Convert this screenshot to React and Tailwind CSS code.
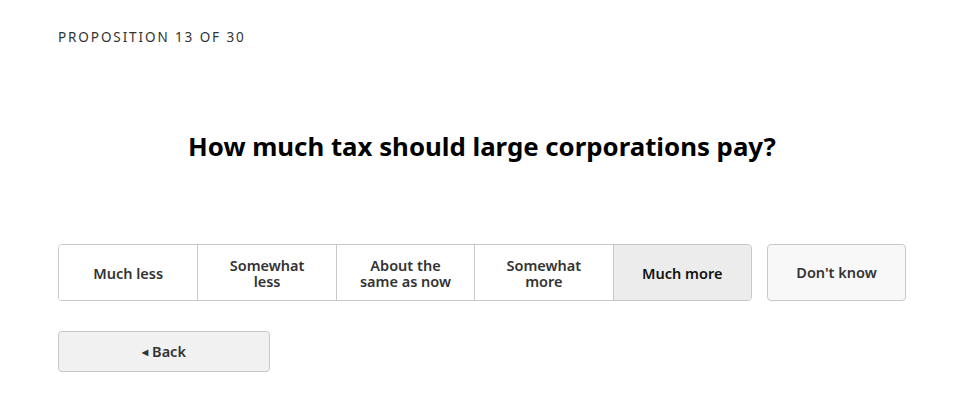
import React from "react";

const options = [
  { label: "Much less" },
  { label: "Somewhat less", lines: ["Somewhat", "less"] },
  { label: "About the same as now", lines: ["About the", "same as now"] },
  { label: "Somewhat more", lines: ["Somewhat", "more"] },
  { label: "Much more", selected: true },
];

export default function App() {
  return (
    <div className="min-h-[401px] w-[964px] bg-white font-['Noto_Sans',sans-serif] text-[#333]">
      <div className="px-[58px] pt-[28px]">
        {/* Header */}
        <div className="text-[13.5px] leading-[18px] tracking-[1.9px] text-[#333]">PROPOSITION 13 OF 30</div>

        {/* Question */}
        <h1 className="mt-[82px] text-center text-[25.8px] font-bold leading-[36px] text-black">
          How much tax should large corporations pay?
        </h1>

        {/* Answers */}
        <div className="mt-[80px] flex gap-[15px]">
          <div className="grid h-[57px] w-[694px] grid-cols-5 overflow-hidden rounded-[4px] border border-[#c8c8c8]">
            {options.map((opt, idx) => (
              <button
                key={`opt-${idx}`}
                className={
                  "flex items-center justify-center text-center text-[14.5px] font-semibold leading-[16px] " +
                  (idx > 0 ? "border-l border-[#c8c8c8] " : "") +
                  (opt.selected ? "bg-[#ececec] text-[#111]" : "bg-white text-[#333]")
                }
              >
                {opt.lines ? (
                  <span>
                    {opt.lines[0]}
                    <br />
                    {opt.lines[1]}
                  </span>
                ) : (
                  <span>{opt.label}</span>
                )}
              </button>
            ))}
          </div>
          <button className="flex h-[57px] w-[139px] items-center justify-center rounded-[4px] border border-[#c8c8c8] bg-[#f8f8f8] text-[14.5px] font-semibold text-[#333]">
            Don't know
          </button>
        </div>

        {/* Back */}
        <button className="mt-[30px] flex h-[41px] w-[212px] items-center justify-center gap-[4px] rounded-[4px] border border-[#c8c8c8] bg-[#f1f1f1] text-[14.5px] font-semibold text-[#333]">
          <span className="text-[8px]">◀</span>
          <span>Back</span>
        </button>
      </div>
    </div>
  );
}
